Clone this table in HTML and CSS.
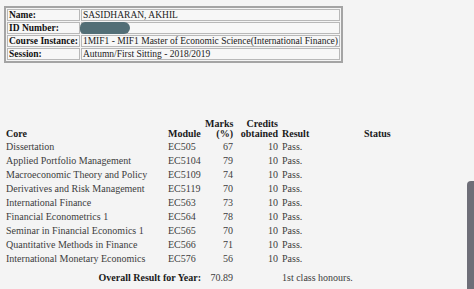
FILE: index.html
```html
<!DOCTYPE html>
<html>
<head>
<meta charset="utf-8">
<link rel="stylesheet" href="styles.css">
</head>
<body>
<div class="page">
  <table class="info">
    <tr><th>Name:</th><td>SASIDHARAN, AKHIL</td></tr>
    <tr><th>ID Number:</th><td><span class="redact"></span></td></tr>
    <tr><th>Course Instance:</th><td>1MIF1 - MIF1 Master of Economic Science(International Finance)</td></tr>
    <tr><th>Session:</th><td>Autumn/First Sitting - 2018/2019</td></tr>
  </table>

  <table class="results">
    <colgroup>
      <col class="c-core"><col class="c-mod"><col class="c-marks"><col class="c-cred"><col class="c-res"><col class="c-stat">
    </colgroup>
    <thead>
      <tr>
        <th class="l">Core</th>
        <th class="l">Module</th>
        <th class="r">Marks<br>(%)</th>
        <th class="r">Credits<br>obtained</th>
        <th class="l">Result</th>
        <th class="l">Status</th>
      </tr>
    </thead>
    <tbody>
      <tr><td>Dissertation</td><td>EC505</td><td class="r">67</td><td class="r">10</td><td>Pass.</td><td></td></tr>
      <tr><td>Applied Portfolio Management</td><td>EC5104</td><td class="r">79</td><td class="r">10</td><td>Pass.</td><td></td></tr>
      <tr><td>Macroeconomic Theory and Policy</td><td>EC5109</td><td class="r">74</td><td class="r">10</td><td>Pass.</td><td></td></tr>
      <tr><td>Derivatives and Risk Management</td><td>EC5119</td><td class="r">70</td><td class="r">10</td><td>Pass.</td><td></td></tr>
      <tr><td>International Finance</td><td>EC563</td><td class="r">73</td><td class="r">10</td><td>Pass.</td><td></td></tr>
      <tr><td>Financial Econometrics 1</td><td>EC564</td><td class="r">78</td><td class="r">10</td><td>Pass.</td><td></td></tr>
      <tr><td>Seminar in Financial Economics 1</td><td>EC565</td><td class="r">70</td><td class="r">10</td><td>Pass.</td><td></td></tr>
      <tr><td>Quantitative Methods in Finance</td><td>EC566</td><td class="r">71</td><td class="r">10</td><td>Pass.</td><td></td></tr>
      <tr><td>International Monetary Economics</td><td>EC576</td><td class="r">56</td><td class="r">10</td><td>Pass.</td><td></td></tr>
      <tr class="overall">
        <th colspan="2" class="r">Overall Result for Year:</th>
        <td class="r">70.89</td><td></td><td colspan="2">1st class honours.</td>
      </tr>
    </tbody>
  </table>
</div>
<div class="scrollbar"></div>
</body>
</html>
```

FILE: styles.css
```css
html, body {
  margin: 0;
  padding: 0;
  background: #f4f4f4;
  height: 100%;
  overflow: hidden;
}

.page {
  padding: 6px 0 0 4px;
  font-family: "Liberation Serif", "Times New Roman", serif;
  font-size: 10px;
  color: #333;
}

.info {
  border: 2px solid #a4a4a4;
  border-spacing: 1px;
  line-height: 10px;
  font-size: 9.5px;
}

.info th,
.info td {
  border: 1px solid #b8b8b8;
  padding: 0 1px;
  text-align: left;
  white-space: nowrap;
  background: #f7f7f7;
}

.info th {
  font-weight: bold;
  color: #111;
}

.info td {
  color: #222;
}

.redact {
  display: inline-block;
  vertical-align: top;
  width: 50px;
  height: 12px;
  margin: -1px 0 -1px -3px;
  border-radius: 6px 7px 7px 5px;
  background: #526e76;
}

.results {
  margin-top: 56px;
  border-collapse: collapse;
  table-layout: fixed;
  width: 460px;
  color: #3d3d3d;
}

.c-core { width: 162px; }
.c-mod { width: 37px; }
.c-marks { width: 32px; }
.c-cred { width: 45px; }
.c-res { width: 82px; }
.c-stat { width: 102px; }

.results th,
.results td {
  padding: 0 2px;
  white-space: nowrap;
  text-align: left;
}

.results thead th {
  font-weight: bold;
  color: #1a1a1a;
  line-height: 10px;
  vertical-align: bottom;
  padding-bottom: 1px;
}

.results tbody td {
  line-height: 14px;
}

.results .r { text-align: right; }
.results .l { text-align: left; }

.results .overall th,
.results .overall td {
  padding-top: 5px;
  line-height: 14px;
}

.results .overall th {
  font-weight: bold;
  color: #1a1a1a;
}

.scrollbar {
  position: absolute;
  right: 0;
  top: 181px;
  width: 7px;
  bottom: 0;
  background: #6e6e78;
  border-top-left-radius: 4px;
}
```
